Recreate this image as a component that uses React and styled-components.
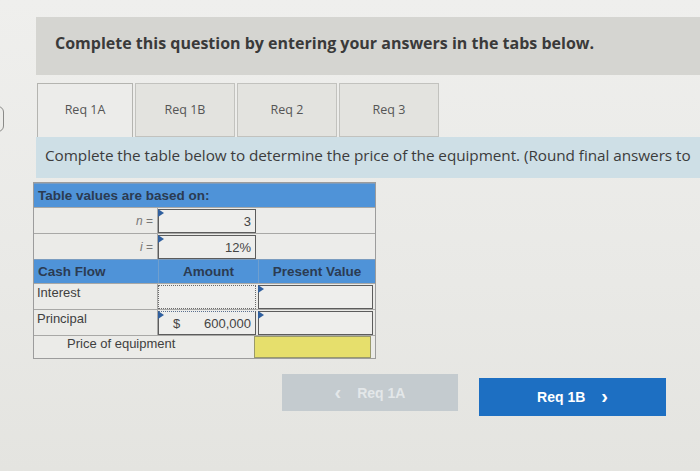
import styled, { createGlobalStyle, css } from "styled-components";

const GlobalStyle = createGlobalStyle`
  html, body {
    margin: 0;
    padding: 0;
    background: #ebebe8;
    font-family: "Open Sans", "DejaVu Sans", sans-serif;
  }
  * { box-sizing: border-box; }
`;

const tabs = ["Req 1A", "Req 1B", "Req 2", "Req 3"];

const App = () => {
  return (
    <Page>
      <GlobalStyle />
      <EdgeMark />
      <Main>
        <Heading>Complete this question by entering your answers in the tabs below.</Heading>
        <TabRow>
          {tabs.map((t, i) => (
            <Tab key={t} $active={i === 0}>
              {t}
            </Tab>
          ))}
        </TabRow>
        <Instruction>
          Complete the table below to determine the price of the equipment. (Round final answers to
        </Instruction>

        <Table>
          <BlueRow>
            <BlueCell $span>Table values are based on:</BlueCell>
          </BlueRow>
          <Row>
            <LabelCell $right>
              <i>n</i>&nbsp;=
            </LabelCell>
            <InputCell $marker>3</InputCell>
            <PlainCell />
          </Row>
          <Row>
            <LabelCell $right>
              <i>i</i>&nbsp;=
            </LabelCell>
            <InputCell $marker>12%</InputCell>
            <PlainCell />
          </Row>
          <BlueRow>
            <BlueCell>Cash Flow</BlueCell>
            <BlueCell $center>Amount</BlueCell>
            <BlueCell $center>Present Value</BlueCell>
          </BlueRow>
          <Row>
            <LabelCell $top>Interest</LabelCell>
            <InputCell $dotted />
            <InputCell $marker />
          </Row>
          <Row>
            <LabelCell $top>Principal</LabelCell>
            <InputCell $marker $dottedTop>
              <Dollar>$</Dollar>
              600,000
            </InputCell>
            <InputCell $marker />
          </Row>
          <Row $last>
            <TotalLabel>Price of equipment</TotalLabel>
            <YellowCell />
          </Row>
        </Table>

        <NavRow>
          <NavButton $disabled>
            <Chev>&lsaquo;</Chev> Req 1A
          </NavButton>
          <NavButton>
            Req 1B <Chev $right>&rsaquo;</Chev>
          </NavButton>
        </NavRow>
      </Main>
    </Page>
  );
};

export default App;

const Page = styled.div`
  position: relative;
  width: 700px;
  height: 471px;
  overflow: hidden;
  background: linear-gradient(180deg, #efefed 0%, #e9e9e6 60%, #e4e4e0 100%);
`;

const EdgeMark = styled.div`
  position: absolute;
  left: -14px;
  top: 106px;
  width: 18px;
  height: 26px;
  border: 1.5px solid #8a8a88;
  border-radius: 6px;
`;

const Main = styled.div`
  padding: 17px 0 0 36px;
  display: flex;
  flex-direction: column;
`;

const Heading = styled.div`
  height: 58px;
  background: #d5d5d1;
  padding: 15px 0 0 19px;
  font-size: 16px;
  font-weight: 700;
  color: #3a3a3a;
  white-space: nowrap;
`;

const TabRow = styled.div`
  margin-top: 8px;
  display: flex;
  gap: 2px;
  height: 54px;
`;

const Tab = styled.div`
  width: 100px;
  display: flex;
  align-items: center;
  justify-content: center;
  padding-bottom: 2px;
  font-size: 12.5px;
  color: #555;
  border: 1px solid #c2c2be;
  background: #e3e3df;
  ${(p) =>
    p.$active &&
    css`
      width: 96px;
      margin-left: 1px;
      background: #ececea;
      border-color: #b4b4b0;
      border-bottom: none;
    `}
`;

const Instruction = styled.div`
  height: 41px;
  background: #cedfe6;
  padding: 8px 0 0 9px;
  font-size: 15.3px;
  letter-spacing: -0.05px;
  color: #3c3c3c;
  white-space: nowrap;
`;

const Table = styled.div`
  margin: 4px 0 0 -3px;
  width: 343px;
  border: 1px solid #9c9c9c;
  font-family: "Liberation Sans", Arial, sans-serif;
  font-size: 13px;
  color: #404040;
  background: #ebebe8;
`;

const Row = styled.div`
  display: grid;
  grid-template-columns: 124px 100px 1fr;
  height: ${(p) => (p.$last ? "23px" : "26px")};
  border-top: 1px solid #a8a8a6;
`;

const BlueRow = styled(Row)`
  height: 24px;
  background: #4f93d8;
  border-top: 1px solid #7a9cc0;
`;

const BlueCell = styled.div`
  display: flex;
  align-items: center;
  padding: 0 4px;
  font-weight: 700;
  font-size: 13.5px;
  color: #2b3b52;
  white-space: nowrap;
  ${(p) => p.$span && "grid-column: 1 / -1;"}
  ${(p) => p.$center && "justify-content: center; border-left: 1px solid #6f9fcf;"}
`;

const LabelCell = styled.div`
  display: flex;
  align-items: ${(p) => (p.$top ? "flex-start" : "center")};
  justify-content: ${(p) => (p.$right ? "flex-end" : "flex-start")};
  padding: ${(p) => (p.$top ? "1px 4px 0 3px" : "0 4px 0 3px")};
  font-size: ${(p) => (p.$right ? "12px" : "13px")};
  color: ${(p) => (p.$right ? "#777" : "#404040")};
  border-right: 1px solid #a8a8a6;
`;

const PlainCell = styled.div`
  background: #ececea;
`;

const InputCell = styled.div`
  position: relative;
  display: flex;
  align-items: center;
  justify-content: flex-end;
  padding: 0 4px;
  font-size: 13px;
  color: #444;
  background: #eeeeec;
  border: 1.5px solid #5c5c5c;
  margin: 1px 2px 0 0;
  ${(p) =>
    p.$dotted &&
    css`
      border: 1.5px dotted #6a6a6a;
    `}
  ${(p) =>
    p.$dottedTop &&
    css`
      border-top: 1.5px dotted #5a6f8f;
    `}
  ${(p) =>
    p.$marker &&
    css`
      &::before {
        content: "";
        position: absolute;
        left: -1px;
        top: -1px;
        border-top: 4px solid transparent;
        border-bottom: 4px solid transparent;
        border-left: 6px solid #2f5f9e;
      }
    `}
`;

const Dollar = styled.span`
  margin-right: auto;
  padding-left: 10px;
`;

const TotalLabel = styled.div`
  grid-column: 1 / 3;
  display: flex;
  align-items: flex-start;
  padding: 0 0 0 33px;
  font-size: 13px;
  color: #404040;
`;

const YellowCell = styled.div`
  background: #e6df6c;
  border: 1px solid #9a9a6a;
  margin: 0 4px 0 -4px;
`;

const NavRow = styled.div`
  margin-top: 15px;
  display: flex;
  justify-content: flex-end;
  gap: 21px;
  padding-right: 34px;
`;

const NavButton = styled.div`
  width: ${(p) => (p.$disabled ? "176px" : "187px")};
  height: ${(p) => (p.$disabled ? "37px" : "38px")};
  margin-top: ${(p) => (p.$disabled ? "0" : "4px")};
  display: flex;
  align-items: center;
  justify-content: center;
  gap: 6px;
  font-family: "Liberation Sans", Arial, sans-serif;
  font-weight: 700;
  font-size: 14px;
  color: ${(p) => (p.$disabled ? "#e3e7e9" : "#ffffff")};
  background: ${(p) => (p.$disabled ? "#c4cbcf" : "#1d6fc2")};
`;

const Chev = styled.span`
  font-size: 20px;
  line-height: 1;
  margin: ${(p) => (p.$right ? "-2px 0 0 10px" : "-2px 10px 0 0")};
`;
